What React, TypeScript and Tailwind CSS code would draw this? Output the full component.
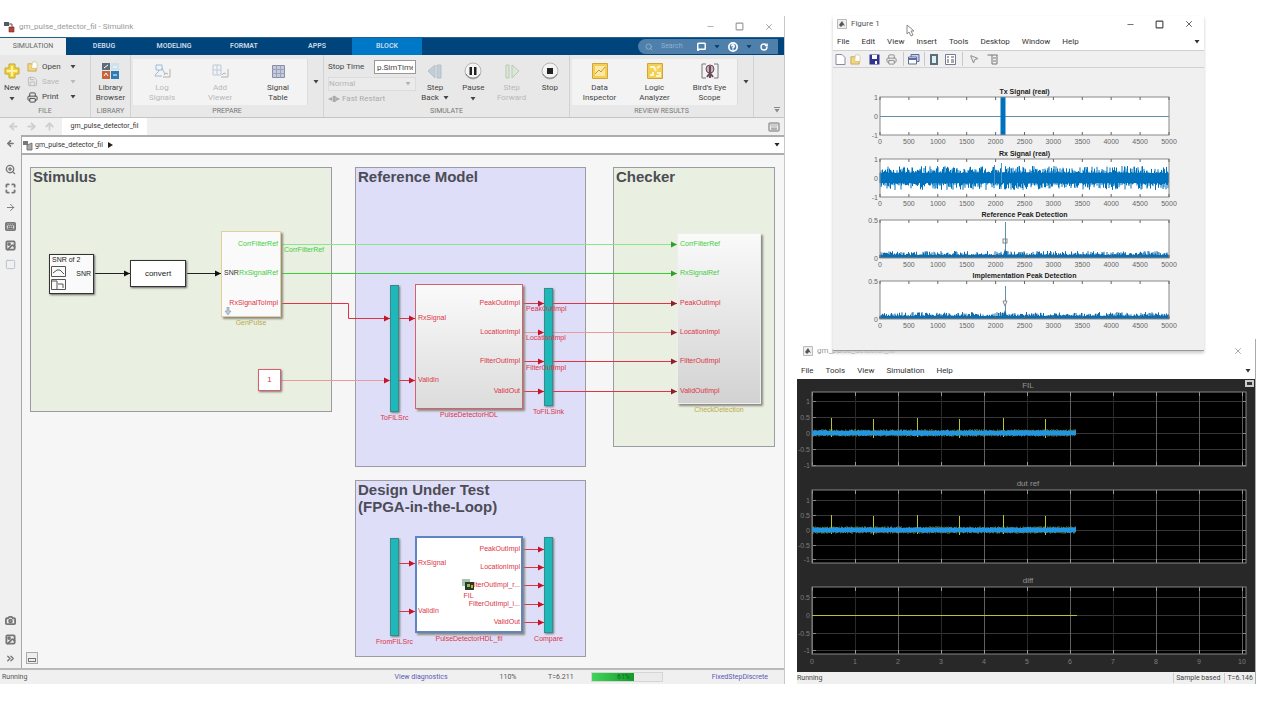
import { ReactNode } from "react";
import {
  ArrowLeft,
  ArrowRight,
  ArrowUp,
  Camera,
  ChevronsRight,
  CircleHelp,
  Image as ImageIcon,
  Keyboard,
  Maximize,
  MessageSquare,
  Minus,
  MousePointer2,
  Printer,
  RotateCw,
  Save,
  Search,
  Square,
  X,
  ZoomIn,
} from "lucide-react";

/* ---------- shared helpers ---------- */

function noise(seed: number) {
  let s = seed;
  return () => {
    s = (s * 1664525 + 1013904223) % 4294967296;
    return s / 4294967296;
  };
}

function Caret({ className = "" }: { className?: string }) {
  return (
    <svg width="6" height="4" viewBox="0 0 6 4" className={className}>
      <path d="M.5 0h5L3 3.500z" fill="currentColor" />
    </svg>
  );
}

function WindowButtons({ className = "" }: { className?: string }) {
  return (
    <div className={`ml-auto flex items-center gap-5 ${className}`}>
      <button aria-label="Minimize">
        <Minus size={9} strokeWidth={2} />
      </button>
      <button aria-label="Maximize">
        <Square size={9} strokeWidth={3} />
      </button>
      <button aria-label="Close">
        <X size={10} strokeWidth={2} />
      </button>
    </div>
  );
}

/* ---------- toolstrip ---------- */

const tabs = [
  { label: "DEBUG", className: "w-[76px]" },
  { label: "MODELING", className: "w-16" },
  { label: "FORMAT", className: "w-[76px]" },
  { label: "APPS", className: "w-[70px]" },
];

function ToolSection({
  label,
  className,
  children,
}: {
  label: string;
  className: string;
  children: ReactNode;
}) {
  return (
    <section className={`flex shrink-0 flex-col border-r border-[#d2d2d2] ${className}`}>
      <div className="flex h-[50px] items-stretch">{children}</div>
      <h2 className="text-center text-[7px] leading-3 text-[#777]">{label}</h2>
    </section>
  );
}

function ToolButton({
  icon,
  lines,
  caret,
  disabled,
  className = "",
}: {
  icon: ReactNode;
  lines: string[];
  caret?: "below" | "inline";
  disabled?: boolean;
  className?: string;
}) {
  return (
    <button
      disabled={disabled}
      className={`flex flex-col items-center text-[8px] leading-[10px] text-[#444] disabled:text-[#b8b8b8] ${className}`}
    >
      <span className="flex h-6 items-center">{icon}</span>
      {lines.map((line, i) => (
        <span key={line} className="flex items-center gap-1 whitespace-nowrap">
          {line}
          {caret === "inline" && i === lines.length - 1 ? <Caret /> : null}
        </span>
      ))}
      {caret === "below" ? <Caret className="mt-1" /> : null}
    </button>
  );
}

function FileRow({ icon, label, disabled }: { icon: ReactNode; label: string; disabled?: boolean }) {
  return (
    <button
      disabled={disabled}
      className="flex h-4 items-center gap-1 text-[8px] text-[#444] disabled:text-[#b8b8b8]"
    >
      {icon}
      <span className="w-6 text-left">{label}</span>
      <Caret />
    </button>
  );
}

function GalleryMore({ label }: { label: string }) {
  return (
    <button aria-label={label} className="mt-1 flex w-4 items-center justify-center border-l border-[#dcdcdc] text-[#444]">
      <Caret />
    </button>
  );
}

function NewIcon() {
  return (
    <svg width="16" height="16" viewBox="0 0 16 16">
      <path d="M5 1h6v4h4v6h-4v4H5v-4H1V5h4z" fill="#f0d444" stroke="#c4a52f" />
      <path d="M8 3v10M3 8h10" stroke="#fff3a0" strokeWidth="2" />
    </svg>
  );
}

function OpenIcon() {
  return (
    <svg width="11" height="11" viewBox="0 0 12 12">
      <path d="M1 3h4l1 1h4v7H1z" fill="#f3d77c" stroke="#c9a65a" />
      <path d="M6 1h4l1 2v5H5z" fill="#fff" stroke="#c9b070" strokeWidth=".6" />
    </svg>
  );
}

function LibraryIcon() {
  return (
    <svg width="17" height="16" viewBox="0 0 17 16">
      <path d="M0 0h8v7H0z" fill="#5e6b7b" />
      <path d="M9 0h8v7H9z" fill="#cfe0ee" />
      <path d="M0 8h8v8H0z" fill="#c9643a" />
      <path d="M9 8h8v8H9z" fill="#2f7cb5" />
      <path d="M2 5l4-3M2 13l2-3 2 3M11 4h4M11 12h4" stroke="#fff" fill="none" />
    </svg>
  );
}

function LogIcon({ square }: { square?: boolean }) {
  return (
    <svg width="18" height="16" viewBox="0 0 18 16" fill="none" opacity=".75">
      {square ? (
        <path d="M2 2h8v10H2zM2 7h8M6 2v10" stroke="#a9bdd0" />
      ) : (
        <path d="M3 2h6v5H3zM6 7c0 3-4 3-4 6h7M9 5l3 6" stroke="#7fa8cc" />
      )}
      <path d="M10 14h7V6M11 12l2-2 2 1" stroke="#999" />
    </svg>
  );
}

function TableIcon() {
  return (
    <svg width="13" height="13" viewBox="0 0 13 13">
      <path d="M.5.5h12v12H.5z" fill="#c4c9dc" stroke="#888ea8" />
      <path d="M.5 4.5h12M.5 8.500h12M4.500.5v12M8.500.5v12" stroke="#9ba1b8" />
    </svg>
  );
}

function StepIcon({ back }: { back?: boolean }) {
  return (
    <svg width="16" height="15" viewBox="0 0 16 15">
      {back ? (
        <path d="M8 1v13L1 7zM10 1h4v13h-4z" fill="#c3ced6" stroke="#b4c1ca" />
      ) : (
        <path d="M8 1v13l7-7zM2 1h3v13H2z" fill="#dde6d8" stroke="#b7cbb0" />
      )}
    </svg>
  );
}

function RoundIcon({ kind }: { kind: "pause" | "stop" }) {
  return (
    <svg width="18" height="18" viewBox="0 0 18 18">
      <circle cx="9" cy="9" r="8" fill="#f3f3f3" stroke="#b4b4b4" />
      <path d="M2 12a8 8 0 0 0 14 0" stroke="#777" fill="none" />
      {kind === "pause" ? (
        <path d="M5.500 5h2.500v8H5.500zM10 5h2.500v8H10z" fill="#222" />
      ) : (
        <path d="M6 6h6v6H6z" fill="#222" />
      )}
    </svg>
  );
}

function YellowIcon({ logic }: { logic?: boolean }) {
  return (
    <svg width="16" height="16" viewBox="0 0 16 16">
      <path d="M.5.5h15v15H.5z" fill="#f5cf55" stroke="#d0a63a" />
      {logic ? (
        <path d="M3 4h4l2 4M13 3l-3 2M3 12h3V9M10 10h3v3H9" stroke="#fff6d0" strokeWidth="2" fill="none" />
      ) : (
        <>
          <path d="M3 3h10v10H3z" fill="#fbe9a4" />
          <path d="M3 11l4-4 2 2 4-5" stroke="#c79a3a" fill="none" />
        </>
      )}
    </svg>
  );
}

function BirdsEyeIcon() {
  return (
    <svg width="18" height="16" viewBox="0 0 18 16" fill="none">
      <path d="M5 1H1v14h4M13 1h4v14h-4" stroke="#777" />
      <circle cx="9" cy="6" r="4" fill="#c8b0b8" stroke="#6d4a5a" />
      <path d="M9 3v12M6 14l3-4 3 4" stroke="#6d4a5a" strokeWidth="2" />
    </svg>
  );
}

function Toolstrip() {
  return (
    <>
      <div className="flex h-[18px] shrink-0 items-stretch border-t border-[#24618f] bg-[#00447c] text-[7px] font-semibold text-[#c9dae8]">
        <button className="w-[66px] bg-[#f0f0f0] font-normal text-[#666]">SIMULATION</button>
        {tabs.map((tab) => (
          <button key={tab.label} className={tab.className}>
            {tab.label}
          </button>
        ))}
        <button className="w-[70px] bg-[#0078c8]">BLOCK</button>
        <div className="my-px mr-1.5 ml-auto flex w-[140px] items-center justify-end gap-2 rounded-l-full bg-[#4f7fab] pr-2.5 text-white">
          <Search size={8} className="text-[#a5c0d8]" />
          <input
            aria-label="Search"
            placeholder="Search"
            className="w-7 bg-transparent text-[7px] font-normal placeholder:text-[#8fb0cd]"
          />
          <button aria-label="Messages">
            <MessageSquare size={9} strokeWidth={4} />
          </button>
          <Caret className="text-[#123d66]" />
          <button aria-label="Help">
            <CircleHelp size={10} strokeWidth={4} />
          </button>
          <Caret className="text-[#123d66]" />
          <button aria-label="Refresh">
            <RotateCw size={8} strokeWidth={4} />
          </button>
        </div>
      </div>

      <div className="flex h-[63px] shrink-0 border-b border-[#c4c4c4] bg-[#e8e8e8]">
        <ToolSection label="FILE" className="w-[91px]">
          <ToolButton icon={<NewIcon />} lines={["New"]} caret="below" className="w-6 pt-1" />
          <div className="flex flex-col pt-1 pl-[3px]">
            <FileRow icon={<OpenIcon />} label="Open" />
            <FileRow icon={<Save size={11} />} label="Save" disabled />
            <FileRow icon={<Printer size={11} />} label="Print" />
          </div>
        </ToolSection>
        <ToolSection label="LIBRARY" className="w-10">
          <ToolButton icon={<LibraryIcon />} lines={["Library", "Browser"]} className="w-full pt-1" />
        </ToolSection>
        <ToolSection label="PREPARE" className="w-[193px]">
          <div className="mt-1 ml-0.5 grid flex-1 grid-cols-3 bg-[#f3f3f3]">
            <ToolButton icon={<LogIcon />} lines={["Log", "Signals"]} disabled />
            <ToolButton icon={<LogIcon square />} lines={["Add", "Viewer"]} disabled />
            <ToolButton icon={<TableIcon />} lines={["Signal", "Table"]} />
          </div>
          <GalleryMore label="More prepare tools" />
        </ToolSection>
        <ToolSection label="SIMULATE" className="w-[246px]">
          <div className="flex w-[92px] flex-col gap-0.5 pt-1 pl-1 text-[8px] text-[#444]">
            <label className="flex h-4 items-center justify-between whitespace-nowrap">
              Stop Time
              <input defaultValue="p.SimTime" className="h-3.5 w-[42px] border border-[#999] bg-white px-0.5" />
            </label>
            <div className="flex h-3.5 items-center border border-[#dcdcdc] bg-[#ebebeb] pr-1 text-[#b4b4b4]">
              <select
                aria-label="Simulation mode"
                disabled
                className="flex-1 appearance-none text-[8px] text-[#b4b4b4]"
              >
                <option>Normal</option>
              </select>
              <Caret />
            </div>
            <button disabled className="text-left leading-3 text-[#aaa]">
              ◂▮▸ Fast Restart
            </button>
          </div>
          <div className="grid flex-1 grid-cols-4 pt-1">
            <ToolButton icon={<StepIcon back />} lines={["Step", "Back"]} caret="inline" />
            <ToolButton icon={<RoundIcon kind="pause" />} lines={["Pause"]} caret="below" />
            <ToolButton icon={<StepIcon />} lines={["Step", "Forward"]} disabled />
            <ToolButton icon={<RoundIcon kind="stop" />} lines={["Stop"]} />
          </div>
        </ToolSection>
        <ToolSection label="REVIEW RESULTS" className="w-[184px]">
          <div className="mt-1 ml-0.5 grid flex-1 grid-cols-3 bg-[#f3f3f3]">
            <ToolButton icon={<YellowIcon />} lines={["Data", "Inspector"]} />
            <ToolButton icon={<YellowIcon logic />} lines={["Logic", "Analyzer"]} />
            <ToolButton icon={<BirdsEyeIcon />} lines={["Bird's Eye", "Scope"]} />
          </div>
          <GalleryMore label="More review tools" />
        </ToolSection>
        <button aria-label="Collapse toolstrip" className="mt-auto mr-1 mb-1 ml-auto border-t border-[#888] pt-px text-[#888]">
          <Caret />
        </button>
      </div>
    </>
  );
}

/* ---------- model canvas ---------- */

const areas = [
  { title: ["Stimulus"], x: 8, y: 12, w: 302, h: 245, tone: "bg-[#e9f0e1]" },
  { title: ["Reference Model"], x: 333, y: 12, w: 231, h: 300, tone: "bg-[#dedef8]" },
  { title: ["Checker"], x: 591, y: 12, w: 162, h: 280, tone: "bg-[#e9f0e1]" },
  { title: ["Design Under Test", "(FPGA-in-the-Loop)"], x: 333, y: 325, w: 231, h: 177, tone: "bg-[#dedef8]" },
];

type Port = { name: string; y: number; side: "in" | "out"; tone: string };

const GREEN = "text-[#3fce3f]";
const RED = "text-[#dd3444]";
const YELLOW = "text-[#b9ab4a]";

const blocks: {
  name: string;
  x: number;
  y: number;
  w: number;
  h: number;
  frame: string;
  nameTone: string;
  ports: Port[];
}[] = [
  {
    name: "GenPulse",
    x: 199,
    y: 76,
    w: 60,
    h: 86,
    frame: "border border-[#e3cf9a] bg-[#fafafa]",
    nameTone: YELLOW,
    ports: [
      { name: "CorrFilterRef", y: 89, side: "out", tone: GREEN },
      { name: "SNR", y: 118, side: "in", tone: "text-[#333]" },
      { name: "RxSignalRef", y: 118, side: "out", tone: GREEN },
      { name: "RxSignalToImpl", y: 148, side: "out", tone: RED },
    ],
  },
  {
    name: "PulseDetectorHDL",
    x: 393,
    y: 129,
    w: 108,
    h: 125,
    frame: "border border-[#d8606c] bg-linear-to-b from-[#fafafa] to-[#dcdcdc]",
    nameTone: RED,
    ports: [
      { name: "RxSignal", y: 163, side: "in", tone: RED },
      { name: "ValidIn", y: 225, side: "in", tone: RED },
      { name: "PeakOutImpl", y: 148, side: "out", tone: RED },
      { name: "LocationImpl", y: 177, side: "out", tone: RED },
      { name: "FilterOutImpl", y: 206, side: "out", tone: RED },
      { name: "ValidOut", y: 236, side: "out", tone: RED },
    ],
  },
  {
    name: "CheckDetection",
    x: 655,
    y: 78,
    w: 84,
    h: 171,
    frame: "border border-[#eeeeee] bg-linear-to-b from-[#fafafa] to-[#d2d2d2]",
    nameTone: YELLOW,
    ports: [
      { name: "CorrFilterRef", y: 89, side: "in", tone: GREEN },
      { name: "RxSignalRef", y: 118, side: "in", tone: GREEN },
      { name: "PeakOutImpl", y: 148, side: "in", tone: RED },
      { name: "LocationImpl", y: 177, side: "in", tone: RED },
      { name: "FilterOutImpl", y: 206, side: "in", tone: RED },
      { name: "ValidOutImpl", y: 236, side: "in", tone: RED },
    ],
  },
  {
    name: "PulseDetectorHDL_fil",
    x: 393,
    y: 381,
    w: 108,
    h: 97,
    frame: "border-2 border-[#5f84c4] bg-white",
    nameTone: RED,
    ports: [
      { name: "RxSignal", y: 408, side: "in", tone: RED },
      { name: "ValidIn", y: 456, side: "in", tone: RED },
      { name: "PeakOutImpl", y: 394, side: "out", tone: RED },
      { name: "LocationImpl", y: 412, side: "out", tone: RED },
      { name: "FilterOutImpl_r...", y: 430, side: "out", tone: RED },
      { name: "FilterOutImpl_i...", y: 449, side: "out", tone: RED },
      { name: "ValidOut", y: 467, side: "out", tone: RED },
    ],
  },
];

const bars = [
  { name: "ToFILSrc", x: 368, y: 130, h: 127 },
  { name: "ToFILSink", x: 522, y: 133, h: 118 },
  { name: "FromFILSrc", x: 368, y: 383, h: 98 },
  { name: "Compare", x: 522, y: 382, h: 96 },
];

const wires = [
  { d: "M259 89.5H655", color: "#8ae68a" },
  { d: "M259 118.5H655", color: "#35d235" },
  { d: "M259 148.5H326.5V163.5H368", color: "#e03444" },
  { d: "M259 225.5H368", color: "#e99a9a" },
  { d: "M377 163.5H393M377 225.5H393", color: "#e03444" },
  { d: "M501 148.5H522M531 148.5H655", color: "#e03444" },
  { d: "M501 177.5H522M531 177.5H655", color: "#e99a9a" },
  { d: "M501 206.5H522M531 206.5H655", color: "#e03444" },
  { d: "M501 236.5H522M531 236.5H655", color: "#e03444" },
  { d: "M377 408.5H393M377 456.5H393", color: "#e03444" },
  { d: "M501 394.5H522M501 412.5H522M501 430.5H522M501 449.5H522M501 467.5H522", color: "#e03444" },
  { d: "M73 118.5H108M165 118.5H199", color: "#222" },
];

const heads: [number, number, string][] = [
  [655, 89, "#2f9e2f"],
  [655, 118, "#2f9e2f"],
  ...[148, 177, 206, 236].flatMap((y): [number, number, string][] => [
    [655, y, "#8f1f2b"],
    [522, y, "#c4142a"],
  ]),
  ...[163, 225].flatMap((y): [number, number, string][] => [
    [368, y, "#c4142a"],
    [393, y, "#c4142a"],
  ]),
  ...[408, 456].map((y): [number, number, string] => [393, y, "#c4142a"]),
  ...[394, 412, 430, 449, 467].map((y): [number, number, string] => [522, y, "#c4142a"]),
  [108, 118, "#111"],
  [199, 118, "#111"],
];

const signalLabels = [
  { text: "CorrFilterRef", x: 262, y: 90, tone: GREEN },
  { text: "PeakOutImpl", x: 504, y: 149, tone: RED },
  { text: "LocationImpl", x: 504, y: 178, tone: RED },
  { text: "FilterOutImpl", x: 504, y: 208, tone: RED },
];

function ModelCanvas() {
  return (
    <div className="relative min-h-[512px] flex-1 overflow-hidden bg-[#f6f6f6] font-['Liberation_Sans',Arial,sans-serif] text-[7px] leading-[10px]">
      {areas.map((a) => (
        <div
          key={a.title[0]}
          className={`absolute border border-[#9b9ba3] px-0.5 text-[15px] leading-[17px] font-bold text-[#4c4c56] ${a.tone}`}
          style={{ left: a.x, top: a.y, width: a.w, height: a.h }}
        >
          {a.title.map((line) => (
            <p key={line} className="whitespace-nowrap">
              {line}
            </p>
          ))}
        </div>
      ))}

      <svg className="absolute inset-0 h-full w-full" fill="none">
        {wires.map((w) => (
          <path key={w.d} d={w.d} stroke={w.color} />
        ))}
        {heads.map(([x, y, color]) => (
          <path key={`${x}-${y}`} d={`M${x} ${y}.5l-6 -3v6z`} fill={color} />
        ))}
      </svg>

      <div className="absolute top-[99px] left-[27px] h-10 w-[45px] border border-[#333] bg-[#fafafa] text-[#222] shadow-[1px_1px_2px_#666]">
        <p className="pl-0.5 leading-[9px] whitespace-nowrap">SNR of 2</p>
        <div className="flex items-center justify-between">
          <svg width="18" height="27" viewBox="0 0 18 27" fill="none" stroke="#555">
            <path d="M1.500 2.500h14v10h-14zM1.500 15.500h14v10h-14z" />
            <path d="M3 9l4-3h3l4 4M2 17h5v8M8 20h5v4" />
          </svg>
          <span className="mb-2 pr-0.5">SNR</span>
        </div>
      </div>
      <div className="absolute top-[105px] left-[108px] flex h-[27px] w-14 items-center justify-center border border-[#333] bg-white text-[8px] text-[#222] shadow-[1px_1px_2px_#666]">
        convert
      </div>
      <div className={`absolute top-[214px] left-[236px] flex h-[22px] w-[23px] items-center justify-center border border-[#d8606c] bg-white text-[8px] shadow-[1px_1px_2px_#777] ${RED}`}>
        1
      </div>

      {blocks.map((b) => (
        <div key={b.name}>
          <div
            className={`absolute shadow-[2px_2px_2px_#8a8a80] ${b.frame}`}
            style={{ left: b.x, top: b.y, width: b.w, height: b.h }}
          />
          {b.ports.map((p) => (
            <span
              key={p.side + p.name}
              className={`absolute flex h-[10px] px-[3px] whitespace-nowrap ${p.side === "out" ? "justify-end" : ""} ${p.tone}`}
              style={{ left: b.x, top: p.y - 5, width: b.w }}
            >
              {p.name}
            </span>
          ))}
          <span
            className={`absolute text-center whitespace-nowrap ${b.nameTone}`}
            style={{ left: b.x, top: b.y + b.h + 1, width: b.w }}
          >
            {b.name}
          </span>
        </div>
      ))}

      {bars.map((b) => (
        <div key={b.name}>
          <div
            className="absolute w-[9px] border border-[#3a8a8c] bg-[#1fb8ba] shadow-[1px_1px_2px_#777]"
            style={{ left: b.x, top: b.y, height: b.h }}
          />
          <span
            className={`absolute w-[45px] text-center whitespace-nowrap ${RED}`}
            style={{ left: b.x - 18, top: b.y + b.h + 1 }}
          >
            {b.name}
          </span>
        </div>
      ))}

      {signalLabels.map((s) => (
        <span key={s.text} className={`absolute whitespace-nowrap ${s.tone}`} style={{ left: s.x, top: s.y }}>
          {s.text}
        </span>
      ))}

      <svg className="absolute top-[152px] left-[202px]" width="8" height="8" viewBox="0 0 8 8">
        <path d="M3 0h2v4h2L4 8 1 4h2z" fill="#b9c9d8" stroke="#8799aa" strokeWidth=".6" />
      </svg>
      <div className={`absolute top-[424px] left-[440px] flex flex-col items-center ${RED}`}>
        <svg width="13" height="12" viewBox="0 0 13 12">
          <path d="M0 0h8v7H0z" fill="#a8c4b0" />
          <path d="M3 3h9v8H3z" fill="#2c3a2c" />
          <path d="M5 5h3v3H5z" fill="#8fc04a" />
          <path d="M9 6h2v3H9z" fill="#d7a53a" />
        </svg>
        FIL
      </div>
      <button
        aria-label="Hide browser"
        className="absolute bottom-1 left-1 flex h-3 w-3 flex-col justify-end border border-[#aaa] bg-[#eee] p-px"
      >
        <span className="h-1 w-full border border-[#777]" />
      </button>
    </div>
  );
}

function SimulinkWindow() {
  return (
    <main className="flex flex-col border-r border-[#c8c8c8] bg-white">
      <header className="flex h-[21px] shrink-0 items-center gap-1 pr-2.5 pl-1 text-[8px] text-[#999]">
        <svg width="11" height="12" viewBox="0 0 11 12">
          <path d="M0 1h5v4H0z" fill="#4f5d66" />
          <path d="M5 3h3v4" stroke="#555" fill="none" />
          <path d="M5 6h5v5H5z" fill="#b4453c" stroke="#7d2a26" strokeWidth=".6" />
        </svg>
        <h1>gm_pulse_detector_fil - Simulink</h1>
        <WindowButtons className="text-[#999]" />
      </header>

      <Toolstrip />

      <div className="flex h-[17px] shrink-0 items-center bg-[#f0f0f0] text-[7px] text-[#333]">
        <div className="flex w-[62px] items-center justify-around px-1 text-[#cfcfcf]">
          <ArrowLeft size={11} strokeWidth={4} />
          <ArrowRight size={11} strokeWidth={4} />
          <ArrowUp size={11} strokeWidth={4} />
        </div>
        <button className="h-full w-[85px] bg-white">gm_pulse_detector_fil</button>
        <Keyboard size={12} strokeWidth={3} className="mr-1 ml-auto text-[#999]" />
      </div>

      <div className="flex flex-1">
        <aside className="flex w-[21px] shrink-0 flex-col items-center gap-2 bg-[#f0f0f0] pt-1 pb-1 text-[#777]">
          <button aria-label="Hide explorer bar" className="mb-2">
            <ArrowLeft size={9} strokeWidth={4} />
          </button>
          <ZoomIn size={11} strokeWidth={3} />
          <Maximize size={11} strokeWidth={4} />
          <ArrowRight size={11} />
          <Keyboard size={11} strokeWidth={4} />
          <ImageIcon size={11} strokeWidth={4} />
          <Square size={11} className="text-[#b5bccb]" />
          <span className="flex-1" />
          <Camera size={11} strokeWidth={4} />
          <ImageIcon size={11} strokeWidth={4} />
          <ChevronsRight size={11} strokeWidth={3} />
        </aside>
        <div className="flex min-w-0 flex-1 flex-col border-l border-[#a8a8a8]">
          <nav className="flex h-5 shrink-0 items-center gap-px border-y-2 border-[#adadad] bg-white pr-1 text-[7px] text-[#333]">
            <svg width="12" height="11" viewBox="0 0 12 11">
              <path d="M1 1h5v4H1z" fill="#777" />
              <path d="M5 5l5-2v7H5z" fill="#aaa" stroke="#666" strokeWidth=".8" />
            </svg>
            <a href="#model" className="whitespace-nowrap">
              gm_pulse_detector_fil
            </a>
            <svg width="5" height="6" viewBox="0 0 5 6" className="ml-1">
              <path d="M0 0l5 3-5 3z" fill="#222" />
            </svg>
            <Caret className="ml-auto text-[#222]" />
          </nav>
          <ModelCanvas />
        </div>
      </div>

      <footer className="flex h-4 shrink-0 items-center border-t-2 border-[#b9b9b9] bg-[#f0f0f0] text-[7px] text-[#555]">
        <span className="flex-1 pl-0.5">Running</span>
        <a href="#diagnostics" className="w-[70px] text-center text-[#5a5ab4]">
          View diagnostics
        </a>
        <span className="w-[80px] pl-6 text-center">110%</span>
        <span className="w-[55px] pl-3">T=6.211</span>
        <div className="h-2.5 w-[72px] border border-[#d5d5d5] bg-[#ebebeb]">
          <div className="h-full w-3/5 bg-linear-to-r from-[#3fd65a] to-[#129a2a] pr-1 text-right text-[7px] leading-2 text-[#0d6b1d]">
            61%
          </div>
        </div>
        <a href="#solver" className="w-[121px] pr-4 text-right text-[#5a5ab4]">
          FixedStepDiscrete
        </a>
      </footer>
    </main>
  );
}

/* ---------- figure window ---------- */

const X0 = 47;
const PLOT_W = 289;
const PLOT_H = 38;

function bandPath(mid: number, up: number, down: number, spread: number, seed: number) {
  const rnd = noise(seed);
  let d = "";
  for (let i = 0; i < PLOT_W * 2; i++) {
    const a = up + Math.pow(rnd(), 3) * spread;
    const b = down + (down > 1 ? Math.pow(rnd(), 3) * spread : 0);
    d += `M${X0 + i / 2} ${(mid - a).toFixed(1)}V${(mid + b).toFixed(1)}`;
  }
  return d;
}

const plots = [
  { title: "Tx Signal (real)", y: 29, labels: ["1", "0", "-1"] },
  { title: "Rx Signal (real)", y: 91, labels: ["1", "0", "-1"] },
  { title: "Reference Peak Detection", y: 152, labels: ["0.5", "", "0"] },
  { title: "Implementation Peak Detection", y: 213, labels: ["0.5", "", "0"] },
];

const ticks = Array.from({ length: 11 }, (_, i) => i * 500);

function FigurePlots() {
  return (
    <svg
      viewBox="0 0 371 282"
      className="block w-full bg-[#f0f0f0] font-['Liberation_Sans',Arial,sans-serif] text-[7px]"
      fill="#666"
    >
      {plots.map((p, n) => (
        <g key={p.title}>
          <rect x={X0} y={p.y} width={PLOT_W} height={PLOT_H} fill="#fff" />
          {n === 0 && (
            <>
              <path d={`M${X0} ${p.y + 19.5}h${PLOT_W}`} stroke="#5f8fae" />
              <path d={`M${X0 + 123} ${p.y}v${PLOT_H}`} stroke="#0072bd" strokeWidth="5" />
            </>
          )}
          {n === 1 && (
            <>
              <path d={bandPath(p.y + 19, 5, 5, 7, 11)} stroke="#0072bd" />
              <path d={`M${X0 + 121.5} ${p.y + 4}v20M${X0 + 114.5} ${p.y + 6}v20`} stroke="#4a94c8" />
            </>
          )}
          {n > 1 && (
            <>
              <path d={bandPath(p.y + PLOT_H, 3, 0, 4, 20 + n)} stroke="#0f6cad" />
              <path d={`M${X0 + 125.5} ${p.y + (n === 2 ? 2 : 5)}V${p.y + PLOT_H}`} stroke="#5f8fae" />
              <path d={`M${X0 + 122} ${p.y + 38}l3 -9 3 9z`} fill="#0f6cad" />
              {n === 2 ? (
                <rect x={X0 + 123} y={p.y + 19} width="4" height="4" fill="none" stroke="#888" />
              ) : (
                <path d={`M${X0 + 123} ${p.y + 20}h4l-2 5z`} fill="#fff" stroke="#888" />
              )}
            </>
          )}
          <rect x={X0} y={p.y} width={PLOT_W} height={PLOT_H} fill="none" stroke="#888" />
          {ticks.map((t) => {
            const x = X0 + (t / 5000) * PLOT_W;
            return (
              <g key={t}>
                <path d={`M${x} ${p.y}v3M${x} ${p.y + PLOT_H}v-3`} stroke="#666" />
                <text x={x} y={p.y + PLOT_H + 9} textAnchor="middle">
                  {t}
                </text>
              </g>
            );
          })}
          {p.labels.map((l, i) => (
            <text key={i} x={X0 - 2} y={p.y + 3 + i * 19} textAnchor="end">
              {l}
            </text>
          ))}
          <text x={X0 + PLOT_W / 2} y={p.y - 3} textAnchor="middle" fontWeight="bold" fill="#222">
            {p.title}
          </text>
        </g>
      ))}
    </svg>
  );
}

function MatlabIcon() {
  return (
    <svg width="10" height="10" viewBox="0 0 10 10">
      <path d="M.5.5h9v9h-9z" fill="#eee" stroke="#bbb" />
      <path d="M2 6l3-4 3 5-2-1-2 2z" fill="#555" />
    </svg>
  );
}

function MenuBar({ items }: { items: string[] }) {
  return (
    <nav className="flex h-4 items-center gap-3 px-1 text-[8px] text-[#333]">
      {items.map((item) => (
        <button key={item}>{item}</button>
      ))}
      <Caret className="ml-auto" />
    </nav>
  );
}

function FigureWindow() {
  return (
    <section className="relative z-10 mr-[52px] ml-9 border-b border-[#999] bg-white shadow-[0_2px_3px_#c9c9c9]">
      <header className="flex h-4 items-center gap-1 pr-2.5 pl-1 text-[8px] text-[#555]">
        <MatlabIcon />
        <h2>Figure 1</h2>
        <WindowButtons className="text-[#444]" />
      </header>
      <div className="mt-0.5">
        <MenuBar items={["File", "Edit", "View", "Insert", "Tools", "Desktop", "Window", "Help"]} />
      </div>
      <div className="flex h-[18px] items-center gap-1 border-y border-[#d0d0d0] bg-[#f0f0f0] px-0.5">
        <button aria-label="New figure">
          <svg width="11" height="11" viewBox="0 0 11 11">
            <path d="M1 .5h6l3 3v7H1z" fill="#fff" stroke="#8a8aa8" />
          </svg>
        </button>
        <button aria-label="Open file">
          <OpenIcon />
        </button>
        <button aria-label="Save figure" className="ml-1">
          <svg width="11" height="11" viewBox="0 0 11 11">
            <path d="M.5.5h10v10H.5z" fill="#31318f" />
            <path d="M3 1h5v4H3zM6 7h2v3H6z" fill="#fff" />
          </svg>
        </button>
        <button aria-label="Print figure" className="mx-0.5 text-[#888]">
          <Printer size={11} />
        </button>
        <span className="h-3.5 w-px bg-[#c8c8c8]" />
        <button aria-label="Link plot">
          <svg width="12" height="11" viewBox="0 0 12 11">
            <path d="M3 .5h8v7H3z" fill="#c8cfe6" stroke="#5d6da0" />
            <path d="M.5 3h8v7h-8z" fill="#fff" stroke="#5d6da0" />
            <path d="M1 4h7v2H1z" fill="#5d6da0" />
          </svg>
        </button>
        <span className="h-3.5 w-px bg-[#c8c8c8]" />
        <button aria-label="Insert colorbar" className="mx-px">
          <svg width="8" height="11" viewBox="0 0 8 11">
            <path d="M1 1h6v9H1z" fill="#dff0ea" stroke="#5d6d80" strokeWidth="2" />
          </svg>
        </button>
        <button aria-label="Insert legend" className="ml-0.5">
          <svg width="11" height="11" viewBox="0 0 11 11">
            <path d="M.5.5h10v10H.5z" fill="#fff" stroke="#777a9a" />
            <path d="M2 3h2M2 6h2M2 8h2M6 3h3M6 6h3M6 8h3" stroke="#555" />
          </svg>
        </button>
        <span className="mx-0.5 h-3.5 w-px bg-[#c8c8c8]" />
        <button aria-label="Edit plot" className="text-[#777]">
          <MousePointer2 size={10} />
        </button>
        <button aria-label="Property inspector" className="ml-1">
          <svg width="11" height="11" viewBox="0 0 11 11">
            <path d="M.5 1h10M5 1v9h5V1M6 4h3M6 7h3" stroke="#777" fill="none" />
          </svg>
        </button>
      </div>
      <FigurePlots />
      <svg className="absolute top-2 left-[73px]" width="9" height="13" viewBox="0 0 9 13">
        <path d="M1 1v9l2-2 2 4 2-1-2-4h3z" fill="#fff" stroke="#888" />
      </svg>
    </section>
  );
}

/* ---------- scope window ---------- */

const scopes = [
  { title: "FIL", y: 13, h: 74, rows: [22, 38, 54, 70, 86], labels: ["1", "0.5", "0", "-0.5", "-1"], zero: 54 },
  { title: "dut ref", y: 111, h: 73, rows: [121, 136, 151, 166, 180], labels: ["1", "0.5", "0", "-0.5", "-1"], zero: 151 },
  { title: "diff", y: 208, h: 67, rows: [218, 236, 254, 271], labels: ["0.5", "0", "-0.5", "-1"], zero: 236 },
];

function tracePath(mid: number, seed: number, size: number) {
  const rnd = noise(seed);
  let d = "";
  for (let i = 0; i < 264; i++) {
    d += `M${15 + i + 0.5} ${(mid - 2 - rnd() * size).toFixed(1)}V${(mid + 2 + rnd() * size).toFixed(1)}`;
  }
  return d;
}

function ScopePlots() {
  return (
    <svg
      viewBox="0 0 458 293"
      className="block w-full bg-[#282828] font-['Liberation_Sans',Arial,sans-serif] text-[7px]"
      fill="#7c7c7c"
    >
      {scopes.map((s, n) => (
        <g key={s.title}>
          <rect x="15" y={s.y} width="434" height={s.h} fill="#000" />
          {s.rows.map((y, i) => (
            <g key={y}>
              <path d={`M15 ${y}.5h434`} stroke="#363636" />
              <path d={`M15 ${y}.5h4M445 ${y}.5h4`} stroke="#888" />
              <text x="13" y={y + 3} textAnchor="end">
                {s.labels[i]}
              </text>
            </g>
          ))}
          {Array.from({ length: 11 }, (_, i) => 15 + i * 43).map((x, i) => (
            <g key={x}>
              <path d={`M${x}.5 ${s.y}v${s.h}`} stroke={i % 2 === 0 || i === 9 ? "#606060" : "#2a2a2a"} />
              <path d={`M${x}.5 ${s.y}v4M${x}.5 ${s.y + s.h}v-4`} stroke="#999" />
            </g>
          ))}
          <rect x="15" y={s.y} width="434" height={s.h} fill="none" stroke="#858585" />
          {n < 2 ? (
            <>
              {[34, 76, 120, 162, 206, 248].map((x, i) => (
                <path key={x} d={`M${x}.5 ${s.zero - (i % 2 ? 14 : 15)}v19`} stroke="#b9c230" />
              ))}
              <path d={tracePath(s.zero, 5 + n, 2)} stroke="#b9c230" strokeWidth=".4" />
              <path d={tracePath(s.zero, 8 + n, 1)} stroke="#2196e3" />
            </>
          ) : (
            <path d={`M15 ${s.zero}.5h265`} stroke="#b9c230" />
          )}
          <text x="231" y={s.y - 4} textAnchor="middle" className="text-[8px]" fill="#959595">
            {s.title}
          </text>
        </g>
      ))}
      {Array.from({ length: 11 }, (_, i) => (
        <text key={i} x={15 + i * 43} y="285" textAnchor="middle">
          {i}
        </text>
      ))}
      <rect x="448" y="1" width="9" height="7" fill="#ccc" />
      <path d="M450 3h5v3h-5z" fill="#333" />
    </svg>
  );
}

function ScopeWindow() {
  return (
    <section className="-mt-3 border-r border-[#aaa] bg-white">
      <header className="flex h-6 items-center gap-1 pr-3 pl-1.5 text-[8px] text-[#999]">
        <MatlabIcon />
        <h2>gm_pulse_detector_fil</h2>
        <button aria-label="Close scope" className="ml-auto">
          <X size={10} />
        </button>
      </header>
      <MenuBar items={["File", "Tools", "View", "Simulation", "Help"]} />
      <ScopePlots />
      <footer className="flex h-3 items-center bg-[#f0f0f0] text-[7px] text-[#444]">
        <span className="flex-1">Running</span>
        <span className="border-l border-[#ccc] px-0.5">Sample based</span>
        <span className="ml-0.5 border-l border-[#ccc] px-0.5">T=6.146</span>
      </footer>
    </section>
  );
}

export default function App() {
  return (
    <div className="grid min-h-screen grid-cols-[785fr_495fr] bg-white pt-4 pb-9 font-[Roboto,'Noto_Sans',sans-serif]">
      <SimulinkWindow />
      <div className="min-w-0 pr-6 pl-3">
        <FigureWindow />
        <ScopeWindow />
      </div>
    </div>
  );
}
